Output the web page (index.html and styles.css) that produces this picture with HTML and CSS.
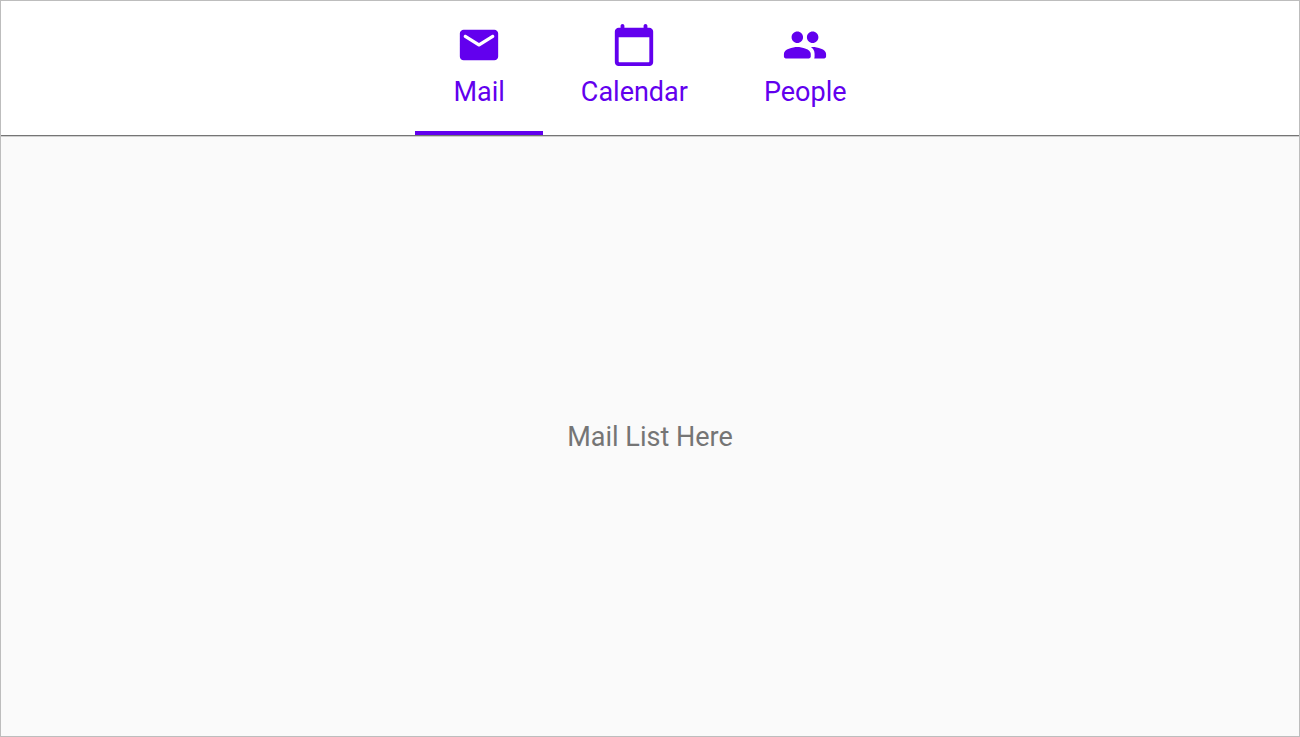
FILE: index.html
```html
<!DOCTYPE html>
<html lang="en">
<head>
<meta charset="utf-8">
<title>Mail</title>
<link rel="stylesheet" href="styles.css">
</head>
<body>
<div class="app">
  <nav class="tabs" role="tablist">
    <button class="tab tab-active" role="tab" aria-selected="true" aria-controls="panel" id="tab-mail">
      <svg class="icon" viewBox="0 0 24 24" aria-hidden="true"><path d="M20 4H4c-1.1 0-2 .9-2 2v12c0 1.1.9 2 2 2h16c1.1 0 2-.9 2-2V6c0-1.1-.9-2-2-2zm-.4 4.25l-7.07 4.42c-.32.2-.74.2-1.06 0L4.4 8.25c-.25-.16-.4-.43-.4-.72 0-.67.73-1.07 1.3-.72L12 11l6.7-4.19c.57-.35 1.3.05 1.3.72 0 .29-.15.56-.4.72z"/></svg>
      <span class="label">Mail</span>
    </button>
    <button class="tab" role="tab" aria-selected="false">
      <svg class="icon" viewBox="0 0 24 24" aria-hidden="true"><path d="M20 3h-1V2c0-.55-.45-1-1-1s-1 .45-1 1v1H7V2c0-.55-.45-1-1-1s-1 .45-1 1v1H4c-1.1 0-2 .9-2 2v16c0 1.1.9 2 2 2h16c1.1 0 2-.9 2-2V5c0-1.1-.9-2-2-2zm-.5 18h-15c-.28 0-.5-.22-.5-.5V8h16v12.500c0 .28-.22.5-.5.5z"/></svg>
      <span class="label">Calendar</span>
    </button>
    <button class="tab" role="tab" aria-selected="false">
      <svg class="icon" viewBox="0 0 24 24" aria-hidden="true"><path d="M16 11c1.66 0 2.99-1.34 2.99-3S17.66 5 16 5s-3 1.34-3 3 1.34 3 3 3zm-8 0c1.66 0 2.99-1.34 2.99-3S9.66 5 8 5 5 6.34 5 8s1.34 3 3 3zm0 2c-2.33 0-7 1.17-7 3.5V18c0 .55.45 1 1 1h12c.55 0 1-.45 1-1v-1.5c0-2.33-4.67-3.5-7-3.5zm8 0c-.29 0-.62.02-.97.05.02.01.03.03.04.04 1.14.83 1.93 1.94 1.93 3.41V18c0 .35-.07.69-.18 1H22c.55 0 1-.45 1-1v-1.5c0-2.33-4.67-3.5-7-3.5z"/></svg>
      <span class="label">People</span>
    </button>
  </nav>
  <main class="panel" id="panel" role="tabpanel" aria-labelledby="tab-mail">
    <p class="message">Mail List Here</p>
  </main>
</div>
</body>
</html>
```
FILE: styles.css
```css
* { box-sizing: border-box; }
body { margin: 0; font-family: Roboto, sans-serif; }
.app { display: flex; flex-direction: column; min-height: 100vh; border: 1px solid #bdbdbd; background: #fafafa; }
.tabs { display: flex; justify-content: center; background: #fff; border-bottom: 1px solid #757575; }
.tab { display: flex; flex-direction: column; align-items: center; gap: 8px; padding: 21px 38px 23px; border: 0; border-bottom: 4px solid transparent; background: none; color: #6200ee; font-family: inherit; font-size: 27px; line-height: 32px; }
.tab-active { border-bottom-color: #6200ee; }
.icon { width: 46px; height: 46px; fill: currentColor; }
.panel { display: flex; flex: 1; align-items: center; justify-content: center; border-top: 1px solid #d0d0d0; }
.message { margin: 0; color: #757575; font-size: 27px; line-height: 32px; }
```
